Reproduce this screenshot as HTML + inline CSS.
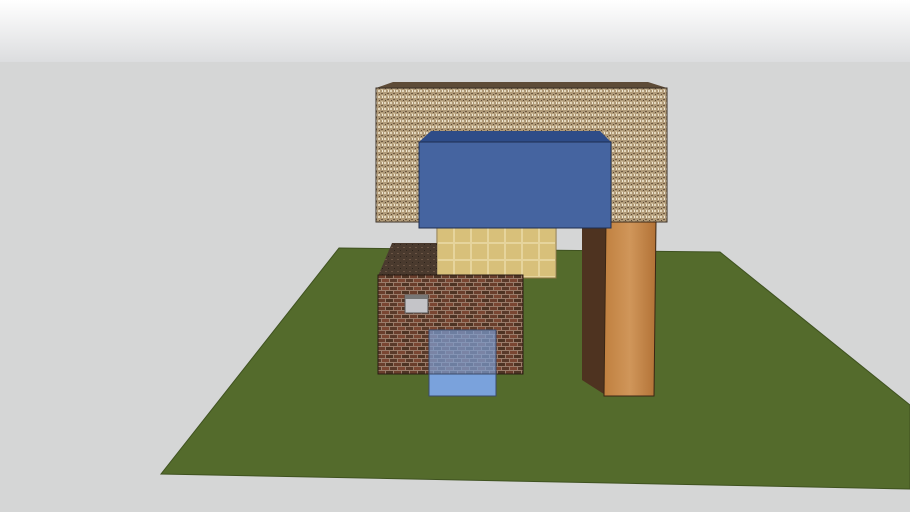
<!DOCTYPE html>
<html><head><meta charset="utf-8"><style>
html,body{margin:0;padding:0;width:910px;height:512px;overflow:hidden;background:#d5d6d6}
svg{display:block}
</style></head><body>
<svg width="910" height="512" viewBox="0 0 910 512" xmlns="http://www.w3.org/2000/svg">
<defs>
<linearGradient id="sky" x1="0" y1="0" x2="0" y2="1">
<stop offset="0" stop-color="#ffffff"/><stop offset="1" stop-color="#dcdddf"/>
</linearGradient>
<pattern id="grav" width="6" height="6" patternUnits="userSpaceOnUse">
<rect width="6" height="6" fill="#b09a78"/>
<rect x="0" y="0" width="2" height="2" fill="#e2d6bc"/>
<rect x="3" y="3" width="2" height="1" fill="#6e5a42"/>
<rect x="4" y="0" width="1" height="2" fill="#efe6d2"/>
<rect x="1" y="4" width="1" height="1" fill="#5a4a36"/>
<rect x="3" y="5" width="2" height="1" fill="#cdbb98"/>
</pattern>
<pattern id="tile" x="437" y="226" width="17" height="17" patternUnits="userSpaceOnUse">
<rect width="17" height="17" fill="#e6d49c"/>
<rect x="1" y="1" width="15" height="15" fill="#d8c07a"/>
</pattern>
<pattern id="brick" x="378" y="275" width="16" height="8" patternUnits="userSpaceOnUse">
<rect width="16" height="8" fill="#9a7c6a"/>
<rect x="0" y="0" width="7" height="3" fill="#6a3e2c"/>
<rect x="8" y="0" width="7" height="3" fill="#4e3424"/>
<rect x="4" y="4" width="7" height="3" fill="#7a4632"/>
<rect x="12" y="4" width="4" height="3" fill="#5a3a2a"/>
<rect x="0" y="4" width="3" height="3" fill="#5a3a2a"/>
</pattern>
<pattern id="bricktop" width="6" height="6" patternUnits="userSpaceOnUse">
<rect width="6" height="6" fill="#4a3a2e"/>
<rect x="1" y="1" width="2" height="1" fill="#6a5444"/>
<rect x="4" y="4" width="1" height="1" fill="#2e241c"/>
</pattern>
<linearGradient id="wood" x1="0" y1="0" x2="1" y2="0">
<stop offset="0" stop-color="#c0803f"/><stop offset=".5" stop-color="#d0965a"/><stop offset="1" stop-color="#b27236"/>
</linearGradient>
</defs>
<rect width="910" height="62" fill="url(#sky)"/>
<rect y="62" width="910" height="450" fill="#d5d6d6"/>
<polygon points="339,248 720,252 910,405 910,489 161,474" fill="#546b2c" stroke="#3f5220" stroke-width="1"/>
<polygon points="376,88 393,82 648,82 667,88" fill="#5e4c38"/>
<rect x="376" y="88" width="291" height="134" fill="url(#grav)" stroke="#3a3026" stroke-width="1"/>
<rect x="437" y="224" width="119" height="54" fill="url(#tile)" stroke="#8a7440" stroke-width="1"/>
<polygon points="582,228 607,224 607,396 582,380" fill="#4e3320"/>
<polygon points="606,222 656,222 654,396 604,396" fill="url(#wood)" stroke="#3a2614" stroke-width="1"/>
<polygon points="419,142 431,131 600,131 611,142" fill="#2e4c88"/>
<rect x="419" y="142" width="192" height="86" fill="#4564a0" stroke="#1e2e50" stroke-width="1"/>
<polygon points="378,276 392,243 437,243 437,276" fill="url(#bricktop)"/>
<rect x="378" y="275" width="145" height="99" fill="url(#brick)" stroke="#2a1c14" stroke-width="1"/>
<rect x="405" y="295" width="23" height="18" fill="#c4c4c8" stroke="#555" stroke-width="1"/>
<rect x="405" y="295" width="23" height="4" fill="#777"/>
<rect x="429" y="330" width="67" height="45" fill="#7a9ed6" fill-opacity="0.7"/>
<rect x="429" y="374" width="67" height="22" fill="#7aa2dc" stroke="#3a4a6a" stroke-width="1"/>
<rect x="429" y="330" width="67" height="66" fill="none" stroke="#3a4a6a" stroke-width="1"/>
</svg>
</body></html>
